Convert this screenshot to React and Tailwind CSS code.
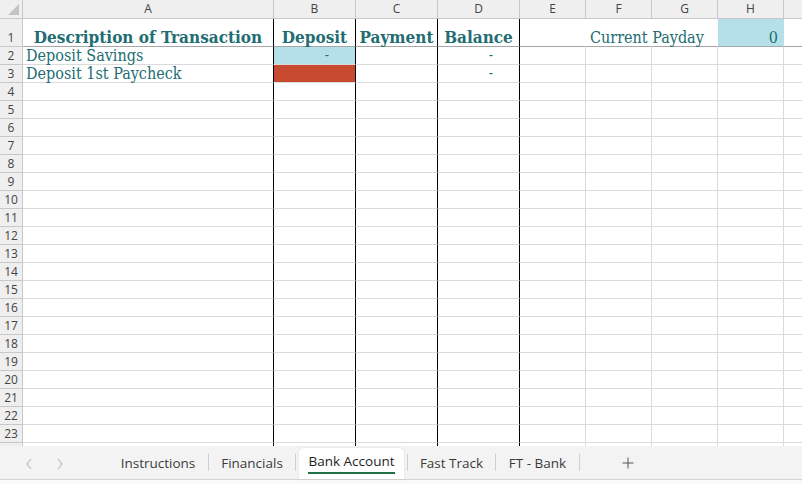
import React from 'react';

const cols = [
  { key: 'A', w: 'w-[251px]', strong: true },
  { key: 'B', w: 'w-[82px]', strong: true },
  { key: 'C', w: 'w-[82px]', strong: true },
  { key: 'D', w: 'w-[82px]', strong: true },
  { key: 'E', w: 'w-[66px]' },
  { key: 'F', w: 'w-[66px]' },
  { key: 'G', w: 'w-[66px]' },
  { key: 'H', w: 'w-[66px]' },
  { key: 'I', w: 'w-[66px]', hideLabel: true },
];

const serif = "font-['DejaVu_Serif_Condensed','Liberation_Serif',serif]";
const teal = 'text-[#226d72]';

// cell contents for the first rows, keyed by column
const rows = {
  1: {
    A: { text: 'Description of Transaction', cls: 'justify-center font-bold text-[17px]' },
    B: { text: 'Deposit', cls: 'justify-center font-bold text-[17px]' },
    C: { text: 'Payment', cls: 'justify-center font-bold text-[17px]' },
    D: { text: 'Balance', cls: 'justify-center font-bold text-[17px]' },
    F: { text: 'Current Payday', cls: 'justify-start pl-[4px] text-[16px] overflow-visible z-10' },
    H: { text: '0', cls: 'justify-end pr-[5px] text-[16px] bg-[#b5e0ea]' },
  },
  2: {
    A: { text: 'Deposit Savings', cls: 'justify-start pl-[3px] text-[16px]' },
    B: { text: '-', cls: 'justify-end pr-[26px] text-[14px] bg-[#b5e0ea]' },
    D: { text: '-', cls: 'justify-end pr-[26px] text-[14px]' },
  },
  3: {
    A: { text: 'Deposit 1st Paycheck', cls: 'justify-start pl-[3px] text-[16px]' },
    B: { text: '', cls: 'bg-[#c84b31]' },
    D: { text: '-', cls: 'justify-end pr-[26px] text-[14px]' },
  },
};

const Corner = () => (
  <div className="w-[23px] h-full shrink-0 border-r border-b border-[#c8c8c8] bg-[#efefef] relative">
    <svg className="absolute right-[3px] bottom-[3px]" width="11" height="11" viewBox="0 0 11 11">
      <polygon points="11,0 11,11 0,11" fill="#c4c4c4" />
    </svg>
  </div>
);

const HeaderRow = () => (
  <div className="flex h-[20px] font-['Open_Sans',sans-serif] text-[12px] text-[#444]">
    <Corner />
    {cols.map((c) => (
      <div key={c.key} className={`${c.w} shrink-0 h-full flex items-center justify-center border-r border-b border-[#c8c8c8] bg-[#efefef]`}>
        {c.hideLabel ? '' : c.key}
      </div>
    ))}
    <div className="flex-1 border-b border-[#c8c8c8] bg-[#efefef]" />
  </div>
);

const Row = ({ n }) => {
  const data = rows[n] || {};
  const first = n === 1;
  return (
    <div className={`flex shrink-0 ${first ? 'h-[28px]' : 'h-[18px]'}`}>
      <div className="w-[23px] shrink-0 h-full flex items-end justify-center border-r border-b border-[#c8c8c8] bg-[#efefef] font-['Open_Sans',sans-serif] text-[12px] leading-[16px] text-[#444]">
        {n < 24 ? n : ''}
      </div>
      {cols.map((c) => {
        const cell = data[c.key];
        // the title row is filled white, so its gridlines don't show
        const right = c.strong ? 'border-r-black' : first ? 'border-r-transparent' : 'border-r-[#dadada]';
        const bottom = first ? 'border-b-[#a6a6a6]' : 'border-b-[#dadada]';
        return (
          <div
            key={c.key}
            className={`${c.w} shrink-0 h-full relative flex items-end whitespace-nowrap border-r border-b ${right} ${bottom} ${serif} ${teal} leading-[17px] ${cell ? cell.cls : ''}`}
          >
            {cell && cell.text}
          </div>
        );
      })}
      <div className={`flex-1 border-b ${first ? 'border-b-[#a6a6a6]' : 'border-b-[#dadada]'}`} />
    </div>
  );
};

const Sep = () => <div className="w-px h-[17px] bg-[#cfcfcf] shrink-0" />;

const Tab = ({ label, w }) => (
  <div className={`${w} shrink-0 flex items-center justify-center text-[#3b3b3b] pt-[2px]`}>{label}</div>
);

const TabBar = () => (
  <div className="shrink-0">
    <div className="h-[34px] bg-[#f3f3f3] border-b border-[#d4d4d4] flex items-center font-['Open_Sans',sans-serif] text-[13.5px]">
      <div className="w-[108px] shrink-0 flex items-center pl-[25px] gap-[23px] pt-[2px]">
        <svg width="8" height="12" viewBox="0 0 8 12">
          <polyline points="6,1 2,6 6,11" fill="none" stroke="#bdbdbd" strokeWidth="1.2" />
        </svg>
        <svg width="8" height="12" viewBox="0 0 8 12">
          <polyline points="2,1 6,6 2,11" fill="none" stroke="#bdbdbd" strokeWidth="1.2" />
        </svg>
      </div>
      <Tab label="Instructions" w="w-[100px]" />
      <Sep />
      <Tab label="Financials" w="w-[86px]" />
      <Sep />
      <div className="w-[111px] shrink-0 h-full flex items-end px-[3px]">
        <div className="w-full h-[31px] bg-white rounded-t-[5px] shadow-[0_0_2px_rgba(0,0,0,0.12)] flex flex-col items-center pt-[3px]">
          <span className="text-[#1e1e1e] font-medium leading-[20px]">Bank Account</span>
          <span className="h-[2px] w-[87px] bg-[#1e7145] mt-[1px]" />
        </div>
      </div>
      <Sep />
      <Tab label="Fast Track" w="w-[87px]" />
      <Sep />
      <Tab label="FT - Bank" w="w-[83px]" />
      <Sep />
      <div className="w-[96px] shrink-0 flex items-center justify-center">
        <svg width="12" height="12" viewBox="0 0 12 12">
          <path d="M6 0.5v11M0.5 6h11" stroke="#555" strokeWidth="1" />
        </svg>
      </div>
    </div>
    <div className="h-[4px] bg-[#f9f9f9]" />
  </div>
);

export default function App() {
  const nums = Array.from({ length: 24 }, (_, i) => i + 1);
  return (
    <div className="w-[802px] h-[484px] flex flex-col bg-white overflow-hidden">
      <div className="h-[446px] shrink-0 overflow-hidden flex flex-col">
        <HeaderRow />
        {nums.map((n) => (
          <Row key={n} n={n} />
        ))}
      </div>
      <TabBar />
    </div>
  );
}
